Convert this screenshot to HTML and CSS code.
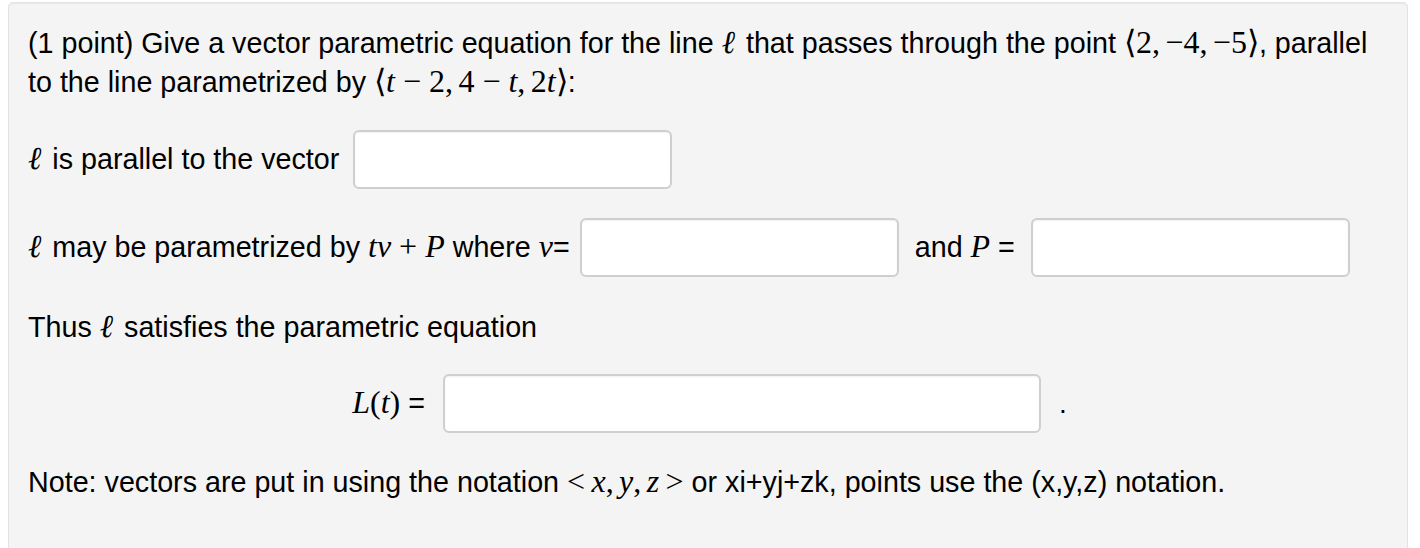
FILE: index.html
```html
<!DOCTYPE html>
<html>
<head>
<meta charset="utf-8">
<link rel="stylesheet" href="styles.css">
</head>
<body>
<div class="well">
  <p class="intro">(1 point) Give a vector parametric equation for the line <span class="m"><i class="ell">ℓ</i></span> that passes through the point <span class="m">⟨2,<span class="th"></span><span class="op">−</span>4,<span class="th"></span><span class="op">−</span>5⟩</span>, parallel<br>to the line parametrized by <span class="m">⟨<i>t</i><span class="bin">−</span>2,<span class="th"></span>4<span class="bin">−</span><i>t</i>,<span class="th"></span>2<i>t</i>⟩</span>:</p>
  <div class="row row-vec">
    <span class="label"><span class="m"><i class="ell">ℓ</i></span> is parallel to the vector</span>
    <span class="field w319"></span>
  </div>
  <div class="row row-param">
    <span class="label"><span class="m"><i class="ell">ℓ</i></span> may be parametrized by <span class="m"><i>tv</i><span class="bin">+</span><i>P</i></span> where <span class="m"><i>v</i></span>=</span>
    <span class="field w319"></span>
    <span class="label and">and <span class="m"><i>P</i></span> =</span>
    <span class="field w319"></span>
  </div>
  <p class="plain thus">Thus <span class="m"><i class="ell">ℓ</i></span> satisfies the parametric equation</p>
  <div class="row row-eq">
    <span class="label eq-label"><span class="m"><i>L</i>(<i>t</i>)</span> =</span>
    <span class="field w598"></span>
    <span class="dot">.</span>
  </div>
  <p class="plain note">Note: vectors are put in using the notation <span class="m">&lt;<span class="rel"></span><i>x</i>,<span class="th"></span><i>y</i>,<span class="th"></span><i>z</i><span class="rel"></span>&gt;</span> or xi+yj+zk, points use the (x,y,z) notation.</p>
</div>
</body>
</html>
```

FILE: styles.css
```css
html, body {
  margin: 0;
  padding: 0;
  background: #ffffff;
}

body {
  padding: 2px 12px 0 8px;
  font-family: "Liberation Sans", Arial, Helvetica, sans-serif;
  font-size: 28.7px;
  color: #000;
}

.well {
  box-sizing: border-box;
  width: 1400px;
  height: 560px;
  background: #f4f4f4;
  border: 1px solid #e3e3e3;
  border-radius: 5px;
  box-shadow: inset 0 1px 1px rgba(0, 0, 0, 0.05);
  padding: 21px 19px 0 19px;
  display: flex;
  flex-direction: column;
  gap: 29px;
}

p {
  margin: 0;
  line-height: 39px;
}

.intro {
  margin-bottom: -1px;
}

.m {
  font-family: "Liberation Serif", "Times New Roman", serif;
  font-size: 32px;
  line-height: 1;
}

.m i {
  font-style: italic;
}

.ell {
  display: inline-block;
  margin-right: 3px;
}

.th {
  display: inline-block;
  width: 0.17em;
}

.bin {
  display: inline-block;
  margin: 0 0.25em;
}

.rel {
  display: inline-block;
  width: 0.2em;
}

.row {
  display: flex;
  align-items: center;
  height: 59px;
  line-height: 39px;
}

.row-vec {
  gap: 14px;
}

.row-param {
  gap: 8px;
}

.row-param .label:first-child {
  margin-right: 2px;
}

.row-param .and {
  margin-left: 8px;
  margin-right: 8px;
}

.row-eq {
  gap: 18px;
}

.eq-label {
  width: 397px;
  text-align: right;
}

.field {
  box-sizing: border-box;
  display: block;
  height: 59px;
  background: #fff;
  border: 2px solid #cfcfcf;
  border-radius: 6px;
  box-shadow: inset 0 1px 2px rgba(0, 0, 0, 0.06);
}

.w319 {
  width: 319px;
}

.w598 {
  width: 598px;
}

.dot {
  font-size: 28px;
}

.thus {
  margin-top: 2px;
  margin-bottom: -2px;
}

.note {
  margin-top: 1px;
}
```
